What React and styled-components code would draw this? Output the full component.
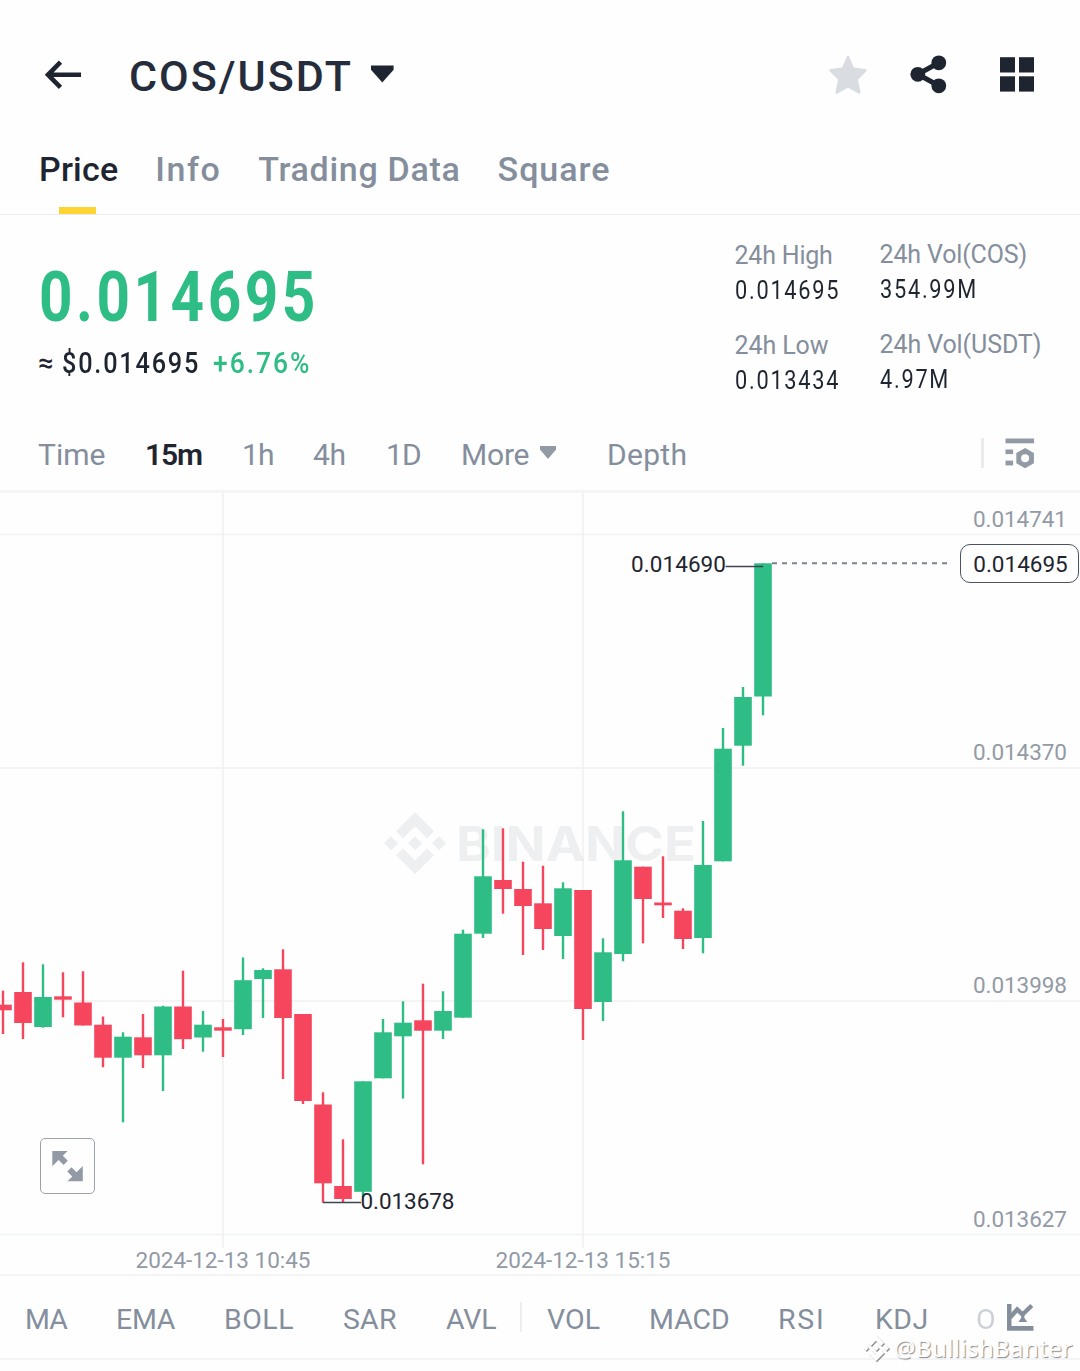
import React from 'react';
import styled, { createGlobalStyle } from 'styled-components';

const GREEN = '#2ebd85';
const RED = '#f6465d';
const DARK = '#1e2530';
const GRAY = '#848e9c';
const LINE = '#f0f1f2';

const GlobalStyle = createGlobalStyle`
    body {
        margin: 0;
        background: #fefefe;
        font-family: Roboto, "Liberation Sans", sans-serif;
        color: ${DARK};
    }
`;

const Page = styled.div`
    position: relative;
    width: 1080px;
    height: 1371px;
    overflow: hidden;
    background: #fefefe;
`;

const Header = styled.header`
    box-sizing: border-box;
    display: flex;
    align-items: center;
    height: 130px;
    padding: 20px 44px 0 44px;
`;

const Title = styled.h1`
    margin: 2px 0 0 47px;
    font-size: 43px;
    font-weight: 500;
    letter-spacing: 2px;
    color: #252c3b;
`;

const TitleCaret = styled.svg`
    margin: 0 0 2px 17px;
`;

const HeaderIcons = styled.div`
    display: flex;
    align-items: center;
    gap: 42.5px;
    margin-left: auto;
`;

const Tabs = styled.nav`
    box-sizing: border-box;
    display: flex;
    gap: 37px;
    height: 85px;
    padding-left: 39px;
    border-bottom: 1px solid #ebecee;
`;

const Tab = styled.div`
    position: relative;
    line-height: 78px;
    font-size: 34px;
    font-weight: 500;
    letter-spacing: ${props => props.$track}px;
    color: ${props => (props.$active ? DARK : GRAY)};
    white-space: nowrap;
`;

const TabBar = styled.span`
    position: absolute;
    left: 20px;
    bottom: 0;
    width: 37px;
    height: 7px;
    background: #fcd535;
`;

const Summary = styled.section`
    box-sizing: border-box;
    display: flex;
    justify-content: space-between;
    height: 205px;
    padding-left: 39px;
`;

const PriceBlock = styled.div`
    display: flex;
    flex-direction: column;
    padding-top: 42px;
`;

const Price = styled.div`
    line-height: 80px;
    font-size: 70px;
    font-weight: 700;
    letter-spacing: 4.2px;
    color: ${GREEN};
    transform: scaleX(0.835);
    transform-origin: left;
`;

const SubPrice = styled.div`
    display: flex;
    margin-top: 6px;
    line-height: 40px;
    font-size: 29px;
    font-weight: 500;
`;

const Approx = styled.span`
    width: 24px;
    margin-left: -1px;
    font-size: 27px;
`;

const Fiat = styled.span`
    width: 151px;
    letter-spacing: 2.1px;
    transform: scaleX(0.87);
    transform-origin: left;
`;

const Change = styled.span`
    letter-spacing: 2.2px;
    color: ${GREEN};
    transform: scaleX(0.91);
    transform-origin: left;
`;

const Stats = styled.div`
    display: grid;
    grid-template-columns: 145px 200.5px;
    grid-template-rows: 90px 90px;
    padding-top: 23px;
`;

const Stat = styled.div`
    display: flex;
    flex-direction: column;
    margin-top: ${props => (props.$lift ? '-1px' : 0)};
`;

const StatLabel = styled.span`
    line-height: 35px;
    font-size: 25px;
    letter-spacing: ${props => props.$track}px;
    color: ${GRAY};
    white-space: nowrap;
`;

const StatValue = styled.span`
    line-height: 35px;
    font-size: 25px;
    letter-spacing: 2px;
    transform: scaleX(0.87);
    transform-origin: left;
    white-space: nowrap;
`;

const Intervals = styled.div`
    box-sizing: border-box;
    display: flex;
    align-items: center;
    height: 73px;
    padding-left: 38px;
    border-bottom: 3px solid #f5f5f6;
`;

const Interval = styled.span`
    flex: 0 0 ${props => props.$width}px;
    margin-bottom: 2px;
    font-size: 30px;
    font-weight: ${props => (props.$active ? 600 : 400)};
    letter-spacing: ${props => props.$track}px;
    color: ${props => (props.$active ? DARK : GRAY)};
    white-space: nowrap;
`;

const IntervalCaret = styled.svg`
    margin: 0 50px 4px 9px;
`;

const IntervalDivider = styled.span`
    width: 3px;
    height: 30px;
    margin: 0 21px 4px auto;
    background: #e9ecee;
`;

const SettingsIcon = styled.svg`
    margin: 0 45px 3px 0;
`;

const ChartArea = styled.section`
    position: relative;
    height: 781px;
    border-bottom: 2px solid #f3f4f5;

    svg {
        display: block;
    }
`;

const PriceTag = styled.div`
    position: absolute;
    box-sizing: border-box;
    left: 960px;
    top: 51px;
    width: 119px;
    height: 39px;
    padding-left: 2px;
    border: 1.5px solid #4a5361;
    border-radius: 10px;
    background: #fefefe;
    text-align: center;
    line-height: 39px;
    font-size: 22.5px;
`;

const ExpandButton = styled.button`
    position: absolute;
    box-sizing: border-box;
    left: 40px;
    top: 645px;
    width: 55px;
    height: 56px;
    padding: 0;
    border: 1.5px solid #9ba2ad;
    border-radius: 5px;
    background: #fefefe;
`;

const Indicators = styled.div`
    box-sizing: border-box;
    display: flex;
    align-items: center;
    height: 84px;
    padding: 4px 0 0 25px;
    border-bottom: 2px solid #f3f4f5;
`;

const Indicator = styled.span`
    flex: 0 0 ${props => props.$width}px;
    padding-top: 1px;
    font-size: 28.5px;
    letter-spacing: ${props => props.$track}px;
    line-height: 30px;
    color: ${GRAY};
    white-space: nowrap;
    opacity: ${props => (props.$faded ? 0.4 : 1)};
`;

const IndicatorDivider = styled.span`
    width: 2px;
    height: 30px;
    margin: 0 25px 4px 0;
    background: #eceef0;
`;

const IndicatorIcon = styled.svg`
    margin-bottom: 4px;
`;

const Credit = styled.div`
    position: absolute;
    left: 862px;
    top: 1334px;
    display: flex;
    align-items: center;
    gap: 4px;
    line-height: 28px;
    font-family: "Noto Sans", sans-serif;
    font-size: 24px;
    letter-spacing: 0.4px;
    color: #fff;
    text-shadow: 1px 1px 1px rgba(60, 60, 60, 0.6);

    svg {
        filter: drop-shadow(1px 1px 0.5px rgba(60, 60, 60, 0.6));
    }
`;

const tabs = [
    { name: 'Price', track: 0.2, active: true },
    { name: 'Info', track: 1.5 },
    { name: 'Trading Data', track: 0.7 },
    { name: 'Square', track: 1 },
];

const stats = [
    { label: '24h High', value: '0.014695', track: -0.2 },
    { label: '24h Vol(COS)', value: '354.99M', track: -0.15, lift: true },
    { label: '24h Low', value: '0.013434', track: -0.1 },
    { label: '24h Vol(USDT)', value: '4.97M', track: -0.1, lift: true },
];

const intervals = [
    { name: 'Time', width: 107, track: 0 },
    { name: '15m', width: 97, track: -1.2, active: true },
    { name: '1h', width: 71, track: -0.8 },
    { name: '4h', width: 73, track: -0.3 },
    { name: '1D', width: 75, track: -0.8 },
    { name: 'More', width: 69, track: -0.2 },
];

const indicators = [
    { name: 'MA', width: 91, track: -0.9 },
    { name: 'EMA', width: 108, track: -0.3 },
    { name: 'BOLL', width: 119, track: 0.5 },
    { name: 'SAR', width: 103, track: 0.2 },
    { name: 'AVL', width: 74, track: -0.1 },
];

const subIndicators = [
    { name: 'VOL', width: 102, track: 0.1 },
    { name: 'MACD', width: 129, track: 0 },
    { name: 'RSI', width: 97, track: 1.8 },
    { name: 'KDJ', width: 101, track: 0.4 },
    { name: 'O', width: 30, track: 0, faded: true },
];

// [up, high, low, bodyTop, bodyBottom], one candle every 20px
const candles = [
    [0, 990.7, 1034, 1004.7, 1010.3],
    [0, 962.3, 1039, 992, 1023],
    [1, 964.3, 1027.7, 997, 1027],
    [0, 972.3, 1017.3, 996.3, 999.7],
    [0, 971.3, 1025.5, 1002.5, 1025.5],
    [0, 1016.5, 1067.3, 1024.7, 1057.7],
    [1, 1032.3, 1122.3, 1036.7, 1057.7],
    [0, 1014, 1068, 1037.3, 1055.3],
    [1, 1005.7, 1091, 1006.5, 1055.3],
    [0, 970.7, 1049, 1006.5, 1039.2],
    [1, 1011, 1051.7, 1024.7, 1037.5],
    [0, 1019, 1057, 1027.3, 1030.7],
    [1, 957.5, 1035, 980.2, 1029.2],
    [1, 968.3, 1018, 970, 979],
    [0, 949.3, 1079, 969.3, 1018],
    [0, 1014, 1104, 1014, 1101],
    [0, 1092.3, 1202.7, 1104.5, 1183.3],
    [0, 1139.3, 1202, 1186, 1199],
    [1, 1081.3, 1197, 1081.3, 1191.8],
    [1, 1019, 1078.3, 1032.3, 1078.3],
    [1, 1001.3, 1098.5, 1022.7, 1036.3],
    [0, 983.7, 1164.3, 1020.3, 1030.7],
    [1, 991.3, 1039, 1011, 1030.7],
    [1, 929.7, 1017.7, 933.7, 1017.7],
    [1, 829.3, 938, 876.3, 933.7],
    [0, 828.3, 913.7, 880, 889],
    [0, 861.7, 955, 889, 906],
    [0, 865.7, 950, 903.3, 929],
    [1, 882.3, 959, 888.3, 936],
    [0, 890, 1040, 890, 1009],
    [1, 938.3, 1021, 952.3, 1002],
    [1, 811.3, 961.3, 860.3, 954],
    [0, 866.7, 943.3, 866.7, 899],
    [0, 856.3, 918, 902.5, 905.3],
    [0, 908.3, 949, 910.7, 939],
    [1, 821, 953.3, 865, 938],
    [1, 728, 861.3, 748.7, 861.3],
    [1, 687, 765.7, 697, 745.7],
    [1, 563.3, 715.3, 563.3, 696.5],
];

const axis = [
    { y: 534.5, label: '0.014741' },
    { y: 768, label: '0.014370' },
    { y: 1001, label: '0.013998' },
    { y: 1234.5, label: '0.013627' },
];

const times = [
    { x: 223, label: '2024-12-13 10:45' },
    { x: 583, label: '2024-12-13 15:15' },
];

function Logo() {
    return (
        <g>
            <path d="M0 -31 L19 -12 L12 -5 L0 -17 L-12 -5 L-19 -12 Z" />
            <path d="M0 31 L19 12 L12 5 L0 17 L-12 5 L-19 12 Z" />
            <path d="M0 -7 L7 0 L0 7 L-7 0 Z" />
            <path d="M-24 -7 L-17 0 L-24 7 L-31 0 Z" />
            <path d="M24 -7 L31 0 L24 7 L17 0 Z" />
        </g>
    );
}

function Candle({ x, data }) {
    const [up, high, low, top, bottom] = data;
    return (
        <g fill={up ? GREEN : RED}>
            <rect x={x - 1.2} y={high} width="2.4" height={low - high} />
            <rect x={x - 8.8} y={top} width="17.6" height={bottom - top} />
        </g>
    );
}

function Chart() {
    return (
        <ChartArea>
            <svg width="1080" height="781" viewBox="0 493 1080 781" fontSize="22.5">
                <g stroke={LINE} strokeWidth="1.6">
                    {axis.map(a => <line key={a.y} x1="0" x2="1080" y1={a.y} y2={a.y} />)}
                    {times.map(t => <line key={t.x} x1={t.x} x2={t.x} y1="493" y2="1248" />)}
                </g>
                <g fill="#848e9c" fillOpacity="0.13">
                    <g transform="translate(415 843.3)"><Logo /></g>
                    <text
                        x="456"
                        y="861"
                        fontFamily="Inter, sans-serif"
                        fontSize="48"
                        fontWeight="700"
                        textLength="240"
                        lengthAdjust="spacingAndGlyphs"
                    >
                        BINANCE
                    </text>
                </g>
                {candles.map((c, i) => <Candle key={i} x={3 + i * 20} data={c} />)}
                <line x1="772" x2="948" y1="563.3" y2="563.3" stroke="#7b8391" strokeWidth="2" strokeDasharray="5 5" />
                <g stroke="#3c4553" strokeWidth="1.6">
                    <line x1="725.5" x2="763" y1="566.5" y2="566.5" />
                    <line x1="323" x2="361" y1="1202.5" y2="1202.5" />
                </g>
                <g fill={DARK}>
                    <text x="631" y="572" textLength="95">0.014690</text>
                    <text x="360.5" y="1209" textLength="94">0.013678</text>
                </g>
                <g fill="#929aa6">
                    {axis.map(a => (
                        <text key={a.label} x="973" y={Math.floor(a.y - 7.2)} textLength="94">{a.label}</text>
                    ))}
                    {times.map(t => (
                        <text key={t.label} x={t.x - 87.5} y="1268" textLength="175">{t.label}</text>
                    ))}
                </g>
            </svg>
            <PriceTag>0.014695</PriceTag>
            <ExpandButton>
                <svg width="51" height="52" viewBox="41 1140 51 52" fill="#929aa5">
                    <path d="M52.3 1151 H67.6 L62.8 1155.8 L67.8 1160.8 L63.6 1165 L58.6 1160 L52.3 1166.3 Z" />
                    <path d="M82.8 1181.3 H67.5 L72.3 1176.5 L67.3 1171.5 L71.5 1167.3 L76.5 1172.3 L82.8 1166 Z" />
                </svg>
            </ExpandButton>
        </ChartArea>
    );
}

function TopBar() {
    return (
        <Header>
            <svg width="38" height="30" viewBox="44 60 38 30" fill="none" stroke={DARK} strokeWidth="4.6">
                <path d="M60.5 62.2 L48 74.8 L60.5 87.4 M47 74.8 H81" />
            </svg>
            <Title>COS/USDT</Title>
            <TitleCaret width="24" height="18" viewBox="370 65 24 18" fill={DARK}>
                <path d="M371 65.5 H393.6 V69.8 L382.3 82.6 L371 69.8 Z" />
            </TitleCaret>
            <HeaderIcons>
                <svg width="38" height="40" viewBox="828.5 55 38 40" fill="#d9dce1" stroke="#d9dce1" strokeWidth="3" strokeLinejoin="round">
                    <path d="M847.5 57.5 L852.4 69 L864.6 70.4 L855.8 79.2 L858.6 92.2 L847.5 86 L836.4 92.2 L839.2 79.2 L830.4 70.4 L842.6 69 Z" />
                </svg>
                <svg width="38" height="40" viewBox="909.5 55 38 40" fill={DARK}>
                    <path d="M938.3 62.8 L917.3 74.3 L938.3 85.8" fill="none" stroke={DARK} strokeWidth="5" />
                    <circle cx="917.3" cy="74.3" r="7.4" />
                    <circle cx="938.3" cy="62.8" r="7.4" />
                    <circle cx="938.3" cy="85.8" r="7.4" />
                </svg>
                <svg width="46" height="40" viewBox="990 55 46 40" fill={DARK}>
                    <rect x="1000" y="57.2" width="15" height="15.3" />
                    <rect x="1019" y="57.2" width="15" height="15.3" />
                    <rect x="1000" y="76.3" width="15" height="15.3" />
                    <rect x="1019" y="76.3" width="15" height="15.3" />
                </svg>
            </HeaderIcons>
        </Header>
    );
}

function IndicatorBar() {
    return (
        <Indicators>
            {indicators.map(i => (
                <Indicator key={i.name} $width={i.width} $track={i.track}>{i.name}</Indicator>
            ))}
            <IndicatorDivider />
            {subIndicators.map(i => (
                <Indicator key={i.name} $width={i.width} $track={i.track} $faded={i.faded}>{i.name}</Indicator>
            ))}
            <IndicatorIcon width="28" height="28" viewBox="1006 1303 28 28" fill={GRAY}>
                <path d="M1007 1304 H1011.5 V1326 H1033.5 V1330.7 H1007 Z" />
                <path d="M1010 1317.5 L1017.2 1309.5 L1022.5 1314.5 L1031.8 1305.5" fill="none" stroke={GRAY} strokeWidth="4.4" />
                <path d="M1021.2 1314 H1024.4 V1318 L1027.4 1322 H1018.4 L1021.2 1318 Z" />
            </IndicatorIcon>
        </Indicators>
    );
}

function App() {
    return (
        <Page>
            <GlobalStyle />
            <TopBar />
            <Tabs>
                {tabs.map(t => (
                    <Tab key={t.name} $active={t.active} $track={t.track}>
                        {t.name}
                        {t.active && <TabBar />}
                    </Tab>
                ))}
            </Tabs>
            <Summary>
                <PriceBlock>
                    <Price>0.014695</Price>
                    <SubPrice>
                        <Approx>≈</Approx>
                        <Fiat>$0.014695</Fiat>
                        <Change>+6.76%</Change>
                    </SubPrice>
                </PriceBlock>
                <Stats>
                    {stats.map(s => (
                        <Stat key={s.label} $lift={s.lift}>
                            <StatLabel $track={s.track}>{s.label}</StatLabel>
                            <StatValue>{s.value}</StatValue>
                        </Stat>
                    ))}
                </Stats>
            </Summary>
            <Intervals>
                {intervals.map(i => (
                    <Interval key={i.name} $active={i.active} $width={i.width} $track={i.track}>{i.name}</Interval>
                ))}
                <IntervalCaret width="18" height="14" viewBox="539 446 18 14" fill="#929aa6">
                    <path d="M540 446 H556 V449.5 L548 459 L540 449.5 Z" />
                </IntervalCaret>
                <Interval $width={80} $track={0.3}>Depth</Interval>
                <IntervalDivider />
                <SettingsIcon width="30" height="31" viewBox="1005.5 438 30 31" fill="#929aa6">
                    <rect x="1006" y="438.5" width="28.6" height="4.8" />
                    <rect x="1006" y="449.5" width="7.6" height="4.6" />
                    <rect x="1006" y="460.6" width="7.6" height="4.8" />
                    <path fillRule="evenodd" d="M1025.6 448 L1034.4 453 V463.2 L1025.6 468.3 L1016.8 463.2 V453 Z M1025.6 454.2 A4 4 0 1 0 1025.6 462.2 A4 4 0 1 0 1025.6 454.2 Z" />
                </SettingsIcon>
            </Intervals>
            <Chart />
            <IndicatorBar />
            <Credit>
                <svg width="28" height="28" viewBox="-33 -33 66 66" fill="#fff"><Logo /></svg>
                @BullishBanter
            </Credit>
        </Page>
    );
}

export default App;
